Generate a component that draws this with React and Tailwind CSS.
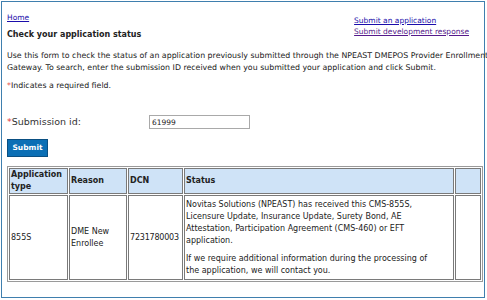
import React from "react";

function App() {
  return (
    <div className="w-[487px] h-[300px] bg-white p-[1px] font-['DejaVu_Sans',sans-serif] text-[7.85px] leading-[12px] text-[#222]">
      <div className="h-[297px] w-[484px] border border-[#3f7fae] pl-[5px] pr-[1px]">
        {/* top area */}
        <div className="flex justify-between">
          <div>
            <a href="#" className="block mt-[10px] text-[7.5px] text-[#1a0dab] underline">
              Home
            </a>
            <h1 className="mt-[5px] font-bold text-[8px]">Check your application status</h1>
          </div>
          <div className="mt-[13px] mr-[14px] flex flex-col text-[7.5px] leading-[11px]">
            <a href="#" className="text-[#1a0dab] underline">
              Submit an application
            </a>
            <a href="#" className="text-[#551a8b] underline">
              Submit development response
            </a>
          </div>
        </div>

        <p className="mt-[9px] whitespace-nowrap">
          Use this form to check the status of an application previously submitted through the NPEAST DMEPOS Provider Enrollment
          <br />
          Gateway. To search, enter the submission ID received when you submitted your application and click Submit.
        </p>

        <p className="mt-[6px]">
          <span className="text-[#e53935]">*</span>Indicates a required field.
        </p>

        {/* form */}
        <div className="mt-[23px] flex items-center">
          <label className="w-[142px] text-[9.5px] text-[#333]">
            <span className="text-[#e53935]">*</span>Submission id:
          </label>
          <input
            defaultValue="61999"
            className="h-[14px] w-[101px] border border-[#a9a9a9] px-[2px] text-[7.5px] text-[#222] outline-none"
          />
        </div>

        <button className="mt-[10px] h-[18px] w-[41px] border border-[#0a4f82] bg-[#0b6fb5] font-bold text-[7.5px] text-white">
          Submit
        </button>

        {/* results */}
        <table className="mt-[9px] w-[476px] border border-[#9a9a9a] border-separate border-spacing-[1px] text-[8px]">
          <thead>
            <tr className="bg-[#cfe3f7]">
              <th className="w-[59px] border border-[#7a7a7a] px-[1px] py-0 text-left align-middle font-bold text-[8px] leading-[12px]">
                Application type
              </th>
              <th className="w-[58px] border border-[#7a7a7a] px-[1px] text-left font-bold text-[8px]">Reason</th>
              <th className="w-[55px] border border-[#7a7a7a] px-[1px] text-left font-bold text-[8px]">DCN</th>
              <th className="border border-[#7a7a7a] px-[1px] text-left font-bold text-[8px]">Status</th>
              <th className="w-[26px] border border-[#7a7a7a]"></th>
            </tr>
          </thead>
          <tbody>
            <tr>
              <td className="border border-[#7a7a7a] px-[1px] align-middle">855S</td>
              <td className="border border-[#7a7a7a] px-[1px] align-middle">
                DME New
                <br />
                Enrollee
              </td>
              <td className="border border-[#7a7a7a] px-[1px] align-middle tracking-[-0.2px]">7231780003</td>
              <td className="border border-[#7a7a7a] px-[1px] pt-[3px] pb-[2px] align-top whitespace-nowrap">
                <p>
                  Novitas Solutions (NPEAST) has received this CMS-855S,
                  <br />
                  Licensure Update, Insurance Update, Surety Bond, AE
                  <br />
                  Attestation, Participation Agreement (CMS-460) or EFT
                  <br />
                  application.
                </p>
                <p className="mt-[6px]">
                  If we require additional information during the processing of
                  <br />
                  the application, we will contact you.
                </p>
              </td>
              <td className="border border-[#7a7a7a]"></td>
            </tr>
          </tbody>
        </table>
      </div>
    </div>
  );
}

export default App;
